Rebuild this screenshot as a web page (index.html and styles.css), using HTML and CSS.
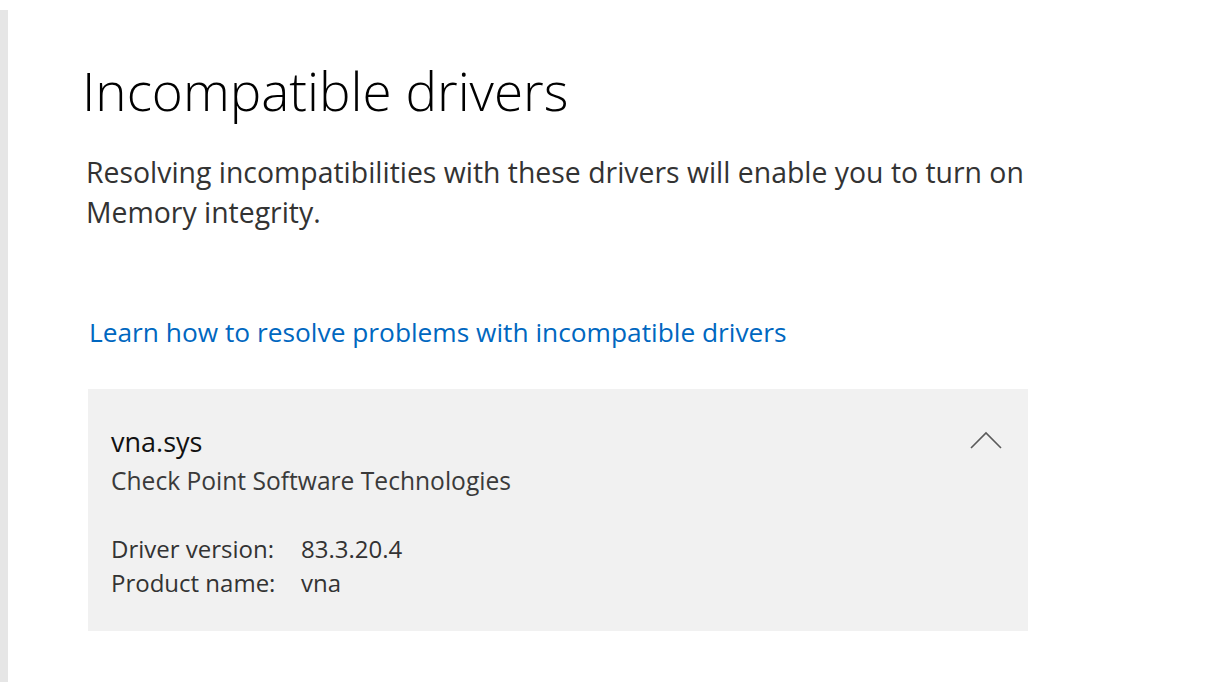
FILE: index.html
```html
<!DOCTYPE html>
<html lang="en">
<head>
  <meta charset="UTF-8" />
  <title>Incompatible drivers</title>
  <link rel="stylesheet" href="styles.css">
</head>
<body>
  <div class="page">
    <div class="rail"></div>

    <div class="main">
      <h1>Incompatible drivers</h1>
      <p class="intro">Resolving incompatibilities with these drivers will enable you to turn on Memory integrity.</p>

      <a class="learn-link" href="#">Learn how to resolve problems with incompatible drivers</a>

      <div class="driver-card">
        <div class="driver-head">
          <div>
            <div class="driver-file">vna.sys</div>
            <div class="driver-vendor">Check Point Software Technologies</div>
          </div>
          <svg class="chevron" width="32" height="18" viewBox="0 0 32 18">
            <polyline points="1,17 16,2 31,17" fill="none" stroke="#5a5a5a" stroke-width="1.6" />
          </svg>
        </div>

        <div class="driver-info">
          <div class="info-row"><span class="info-label">Driver version:</span><span>83.3.20.4</span></div>
          <div class="info-row"><span class="info-label">Product name:</span><span>vna</span></div>
        </div>
      </div>
    </div>
  </div>
</body>
</html>
```
FILE: styles.css
```css
body { margin: 0; background: #fff; font-family: "Open Sans", "Noto Sans", sans-serif; color: #1a1a1a; }
.page { display: flex; height: 682px; overflow: hidden; }
.rail { width: 8px; margin-top: 10px; background: #e6e6e6; flex-shrink: 0; }
.main { padding-left: 78px; }

h1 { margin: 60px 0 0 -4px; font-size: 53px; font-weight: 300; line-height: 62px; color: #000; }
.intro { margin: 30px 0 0; width: 960px; font-size: 28.4px; line-height: 40px; color: #333; }

.learn-link { display: block; margin: 82px 0 0 3px; font-size: 26.3px; line-height: 36px; color: #0067c0; text-decoration: none; }

.driver-card { margin: 39px 0 0 2px; width: 940px; box-sizing: border-box; padding: 35px 26px 31px 23px; background: #f1f1f1; }
.driver-head { display: flex; justify-content: space-between; align-items: flex-start; }
.driver-file { font-size: 27px; line-height: 36px; color: #111; }
.driver-vendor { margin-top: 4px; font-size: 24.6px; line-height: 34px; color: #3a3a3a; }
.chevron { margin-top: 7px; }

.driver-info { margin-top: 34px; }
.info-row { font-size: 24px; line-height: 34px; color: #333; }
.info-label { display: inline-block; width: 190px; }
```
